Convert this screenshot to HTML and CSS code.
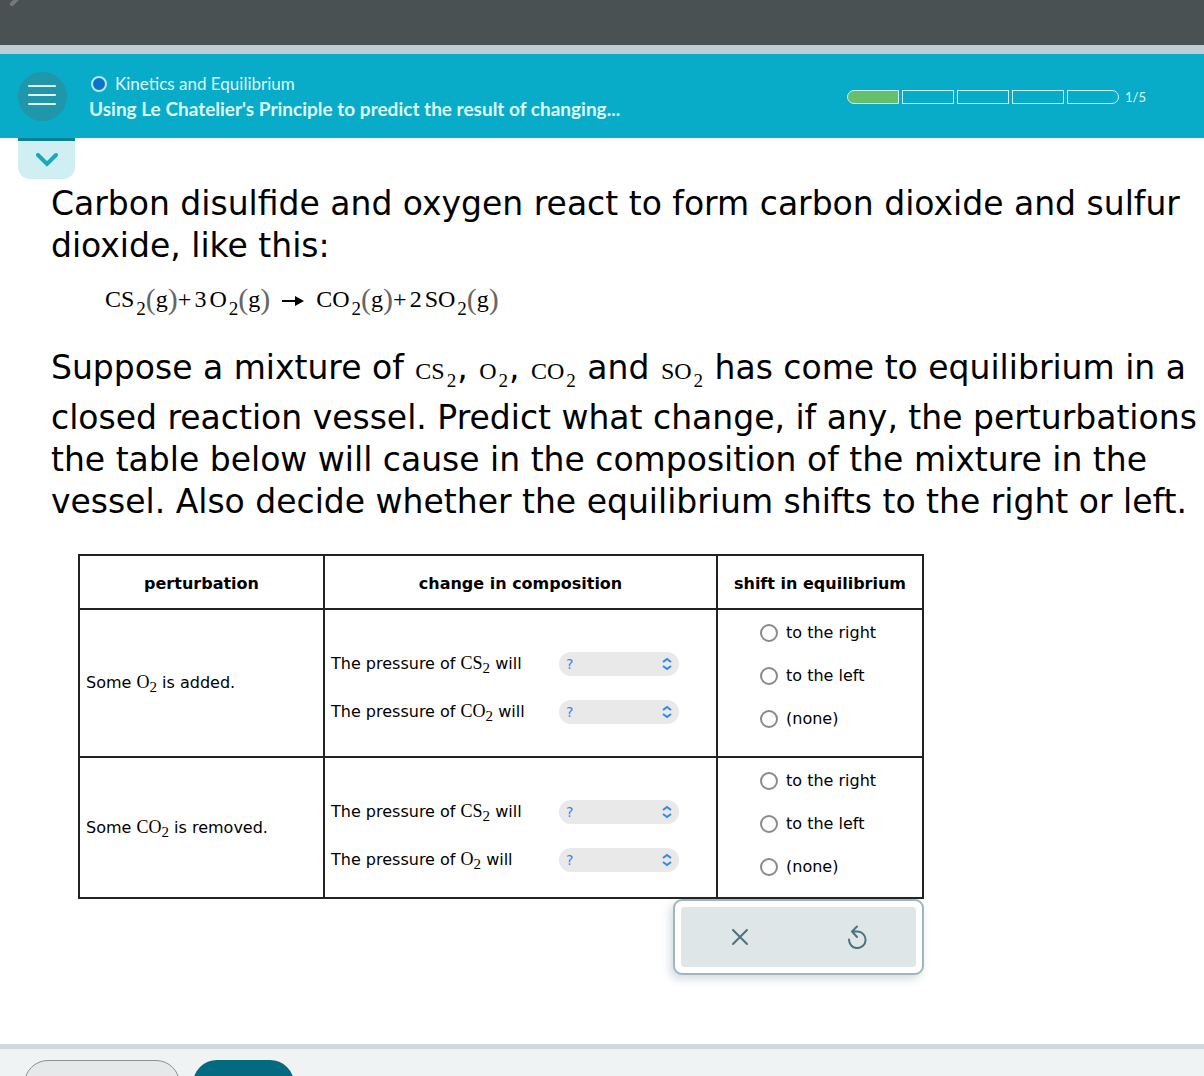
FILE: index.html
```
<!DOCTYPE html>
<html lang="en">
<head>
  <meta charset="UTF-8">
  <meta name="viewport" content="width=device-width, initial-scale=1.0">
  <title>Kinetics and Equilibrium</title>
  <link rel="stylesheet" href="styles.css">
</head>
<body>
  <div class="top-bar">
    <svg width="24" height="8" viewBox="0 0 24 8"><path d="M12 4 L18 -2" stroke="#747a7c" stroke-width="4" stroke-linecap="round"/></svg>
  </div>

  <header>
    <button class="menu-btn" type="button" aria-label="Menu">
      <svg width="29" height="22" viewBox="0 0 29 22" stroke="#e4ffff" stroke-width="2" stroke-linecap="round">
        <path d="M1 1H27M1 10H27M1 19H27"/>
      </svg>
    </button>
    <div class="titles">
      <div class="topic"><span class="dot"></span>Kinetics and Equilibrium</div>
      <div class="lesson">Using Le Chatelier's Principle to predict the result of changing...</div>
    </div>
    <div class="progress">
      <span class="segment done"></span>
      <span class="segment"></span>
      <span class="segment"></span>
      <span class="segment"></span>
      <span class="segment"></span>
      <span class="count">1/5</span>
    </div>
  </header>

  <main>
    <button class="expand-btn" type="button" aria-label="Expand">
      <svg width="22" height="14" viewBox="0 0 22 14" fill="none" stroke="#1aa7bf" stroke-width="4" stroke-linecap="round"><path d="M2 2L11 11L20 2"/></svg>
    </button>

    <div class="question">
      <p>Carbon disulfide and oxygen react to form carbon dioxide and sulfur<br>dioxide, like this:</p>

      <div class="equation">
        <span class="chem">CS<sub>2</sub><i>(</i>g<i>)</i>+<b>3</b>O<sub>2</sub><i>(</i>g<i>)</i></span>
        <svg width="22" height="10" viewBox="0 0 22 10"><path d="M0 5H16" stroke="#000" stroke-width="2"/><path d="M13 0L22 5L13 10Z"/></svg>
        <span class="chem">CO<sub>2</sub><i>(</i>g<i>)</i>+<b>2</b>SO<sub>2</sub><i>(</i>g<i>)</i></span>
      </div>

      <p><span class="tall-line">Suppose a mixture of <span class="chem">CS<sub>2</sub></span>, <span class="chem">O<sub>2</sub></span>, <span class="chem">CO<sub>2</sub></span> and <span class="chem">SO<sub>2</sub></span> has come to equilibrium in a</span>closed reaction vessel. Predict what change, if any, the perturbations in<br>the table below will cause in the composition of the mixture in the<br>vessel. Also decide whether the equilibrium shifts to the right or left.</p>

      <div class="answer">
        <table>
          <thead>
            <tr>
              <th class="col-perturbation">perturbation</th>
              <th class="col-change">change in composition</th>
              <th class="col-shift">shift in equilibrium</th>
            </tr>
          </thead>
          <tbody>
            <tr class="row-added">
              <td>Some <span class="chem">O<sub>2</sub></span> is added.</td>
              <td class="top">
                <div class="changes">
                  <label for="added-cs2">The pressure of <span class="chem">CS<sub>2</sub></span> will</label>
                  <div class="select">
                    <select id="added-cs2"><option>?</option></select>
                    <svg width="12" height="14" viewBox="0 0 12 14"><path d="M2 5L6 2L10 5M2 9L6 12L10 9"/></svg>
                  </div>
                  <label for="added-co2">The pressure of <span class="chem">CO<sub>2</sub></span> will</label>
                  <div class="select">
                    <select id="added-co2"><option>?</option></select>
                    <svg width="12" height="14" viewBox="0 0 12 14"><path d="M2 5L6 2L10 5M2 9L6 12L10 9"/></svg>
                  </div>
                </div>
              </td>
              <td class="top">
                <div class="shifts">
                  <label><input type="radio" name="added">to the right</label>
                  <label><input type="radio" name="added">to the left</label>
                  <label><input type="radio" name="added">(none)</label>
                </div>
              </td>
            </tr>
            <tr class="row-removed">
              <td>Some <span class="chem">CO<sub>2</sub></span> is removed.</td>
              <td class="top">
                <div class="changes">
                  <label for="removed-cs2">The pressure of <span class="chem">CS<sub>2</sub></span> will</label>
                  <div class="select">
                    <select id="removed-cs2"><option>?</option></select>
                    <svg width="12" height="14" viewBox="0 0 12 14"><path d="M2 5L6 2L10 5M2 9L6 12L10 9"/></svg>
                  </div>
                  <label for="removed-o2">The pressure of <span class="chem">O<sub>2</sub></span> will</label>
                  <div class="select">
                    <select id="removed-o2"><option>?</option></select>
                    <svg width="12" height="14" viewBox="0 0 12 14"><path d="M2 5L6 2L10 5M2 9L6 12L10 9"/></svg>
                  </div>
                </div>
              </td>
              <td class="top">
                <div class="shifts">
                  <label><input type="radio" name="removed">to the right</label>
                  <label><input type="radio" name="removed">to the left</label>
                  <label><input type="radio" name="removed">(none)</label>
                </div>
              </td>
            </tr>
          </tbody>
        </table>

        <div class="tools">
          <button type="button" aria-label="Clear">
            <svg width="18" height="18" viewBox="0 0 18 18"><path d="M2 2L16 16M16 2L2 16"/></svg>
          </button>
          <button type="button" aria-label="Reset">
            <svg width="20" height="24" viewBox="0 0 20 24"><path d="M2 14.500A8.300 8.300 0 1 0 10.500 6.500H5M10 1.500L5 6.500L10 12"/></svg>
          </button>
        </div>
      </div>
    </div>
  </main>

  <footer>
    <button class="footer-btn explain" type="button" aria-label="Explanation"></button>
    <button class="footer-btn check" type="button" aria-label="Check"></button>
  </footer>
</body>
</html>
```
FILE: styles.css
```
* {
  box-sizing: border-box;
}
body {
  margin: 0;
  height: 100vh;
  display: flex;
  flex-direction: column;
  overflow: hidden;
  background-color: #fff;
  color: #000;
  font-family: Verdana, "DejaVu Sans", sans-serif;
}
button {
  border: none;
  padding: 0;
  cursor: pointer;
}
svg {
  display: block;
}
.top-bar {
  flex: none;
  height: 54px;
  background-color: #4a5153;
  border-bottom: 9px solid #c0ced4;
}
header {
  flex: none;
  height: 84px;
  padding: 0 58px 0 18px;
  display: flex;
  align-items: center;
  background-color: #08abc8;
  color: #dcfbff;
  font-family: "Proxima Nova", Lato, sans-serif;
}
.menu-btn {
  width: 49px;
  height: 49px;
  border-radius: 50%;
  background-color: #2096aa;
  display: flex;
  align-items: center;
  justify-content: center;
}
.titles {
  flex: 1;
  margin-left: 22px;
  padding-top: 2px;
  white-space: nowrap;
}
.topic {
  display: flex;
  align-items: center;
  font-size: 17px;
  line-height: 24px;
}
.dot {
  width: 16px;
  height: 16px;
  margin: 0 8px 0 2px;
  border: 2px solid #b5e9f5;
  border-radius: 50%;
  background-color: #0b74c8;
}
.lesson {
  font-size: 19px;
  font-weight: bold;
  line-height: 26px;
}
.progress {
  display: flex;
  align-items: center;
  gap: 3px;
  padding-top: 2px;
}
.segment {
  width: 52px;
  height: 14px;
  border: 1px solid #c5f6fa;
}
.segment:first-child {
  border-radius: 7px 0 0 7px;
}
.segment:nth-child(5) {
  border-radius: 0 7px 7px 0;
}
.done {
  background-color: #67bf6b;
}
.count {
  margin-left: 3px;
  font-size: 13px;
}
main {
  flex: 1;
  min-height: 0;
}
.expand-btn {
  width: 57px;
  height: 41px;
  margin-left: 18px;
  border-top: 3px solid #0f7f92;
  border-radius: 0 0 12px 12px;
  background-color: #cfeff2;
  display: flex;
  align-items: center;
  justify-content: center;
}
.question {
  padding: 4px 0 0 51px;
  font-size: 33px;
  line-height: 42px;
  white-space: nowrap;
}
.question p {
  margin: 0;
}
.tall-line {
  display: block;
  padding-bottom: 8px;
}
.chem {
  font-family: "Liberation Serif", serif;
  font-size: 24px;
  line-height: 0;
}
.chem sub {
  margin-left: 2px;
  font-size: 19px;
  line-height: 0;
  vertical-align: -8px;
}
.tall-line .chem {
  margin: 0 1px;
}
.equation {
  display: flex;
  align-items: center;
  gap: 12px;
  height: 42px;
  margin: 16px 0 22px 54px;
}
.equation svg {
  margin-bottom: 6px;
}
.equation i {
  color: #666;
  font-size: 30px;
  font-style: normal;
  vertical-align: -2px;
}
.equation b {
  margin: 0 3px;
  font-weight: normal;
}
.answer {
  width: 846px;
  margin: 31px 0 0 27px;
  display: flex;
  flex-direction: column;
  align-items: flex-end;
}
table {
  width: 100%;
  table-layout: fixed;
  border: 1px solid #222;
  border-collapse: collapse;
  font-size: 16px;
  line-height: 24px;
}
th, td {
  border: 2px solid #222;
  padding: 0 6px;
  text-align: left;
}
th {
  height: 54px;
  padding-top: 4px;
  text-align: center;
}
.col-perturbation {
  width: 245px;
}
.col-change {
  width: 393px;
}
.row-added {
  height: 148px;
}
.row-removed {
  height: 141px;
}
.top {
  vertical-align: top;
}
td .chem {
  font-size: 18px;
}
td .chem sub {
  margin-left: 0;
  font-size: 15px;
  vertical-align: -4px;
}
.changes {
  display: grid;
  grid-template-columns: 228px 120px;
  row-gap: 24px;
  margin-top: 42px;
}
.select {
  position: relative;
}
.select select {
  display: block;
  width: 100%;
  height: 24px;
  padding: 0 7px;
  appearance: none;
  border: none;
  border-radius: 12px;
  background-color: #e9e9e9;
  color: #3285f5;
  font-family: inherit;
  font-size: 14px;
}
.select svg {
  position: absolute;
  top: 5px;
  right: 6px;
  fill: none;
  stroke: #3285f5;
  stroke-width: 2;
  pointer-events: none;
}
.shifts {
  padding: 1px 0 0 36px;
}
.shifts label {
  display: flex;
  align-items: center;
  gap: 8px;
  height: 43px;
}
.shifts input {
  width: 18px;
  height: 18px;
  margin: 0;
  appearance: none;
  border: 2px solid #8a8a8a;
  border-radius: 50%;
}
.tools {
  width: 251px;
  height: 76px;
  padding: 6px;
  border: 2px solid #9fb6be;
  border-radius: 9px;
  background-color: #fff;
  box-shadow: -3px 4px 8px rgba(80, 120, 135, 0.25);
  display: flex;
}
.tools button {
  flex: 1;
  background-color: #dee6e8;
  display: flex;
  align-items: center;
  justify-content: center;
}
.tools button:first-child {
  border-radius: 4px 0 0 4px;
}
.tools button:last-child {
  border-radius: 0 4px 4px 0;
}
.tools svg {
  fill: none;
  stroke: #4c727e;
  stroke-width: 2;
  stroke-linecap: round;
  stroke-linejoin: round;
}
footer {
  flex: none;
  height: 32px;
  padding: 11px 24px 0;
  border-top: 5px solid #d0dadc;
  background-color: #eff3f4;
  display: flex;
  gap: 13px;
  overflow: hidden;
}
.footer-btn {
  flex: none;
  height: 48px;
  border-radius: 24px;
}
.explain {
  width: 156px;
  border: 1px solid #8d9092;
  background-color: #e7e8e9;
}
.check {
  width: 101px;
  background-color: #046a80;
}
```
